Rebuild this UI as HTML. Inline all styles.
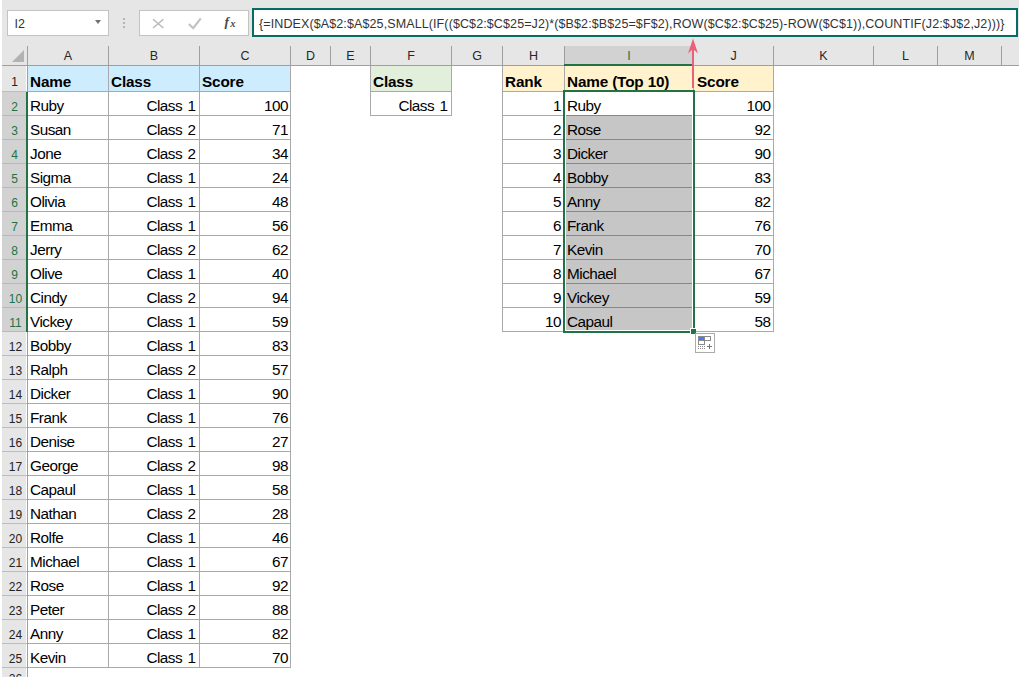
<!DOCTYPE html>
<html lang="en"><head><meta charset="utf-8"><title>Excel – Top 10 names by class</title>
<style>
html,body{margin:0;padding:0}
body{width:1019px;height:677px;overflow:hidden;background:#fff;position:relative;font-family:"Liberation Sans",sans-serif;color:#000}
.a{position:absolute}
.bar{left:0;top:0;width:1019px;height:66px;background:#e6e6e6}
.strip{left:0;top:0;width:2px;height:677px;background:#fff}
.box{background:#fff;border:1px solid #c3c3c3;box-sizing:border-box}
.ui{font-size:12px;color:#262626;white-space:nowrap}
.ch{top:46px;height:19px;line-height:20px;text-align:center;font-size:12.5px;color:#262626}
.rh{left:2px;width:24px;height:23px;line-height:27px;text-align:center;font-size:12px;color:#222;background:#e6e6e6;box-sizing:border-box;padding-left:3px}
.rh.s{background:#d2d2d2;color:#217346}
.c{height:23px;line-height:27px;font-size:15.3px;letter-spacing:-0.5px;word-spacing:1.6px;white-space:nowrap;box-sizing:border-box;padding:0 2px 0 2px;overflow:hidden}
.r{text-align:right}
.b{font-weight:bold;letter-spacing:-0.15px;word-spacing:0}
.v{width:1px;background:#a9a9a9}
.h{height:1px;background:#a9a9a9}
</style></head><body>

<div class="a bar"></div><div class="a strip"></div>
<div class="a box" style="left:7px;top:10px;width:102px;height:26px"></div>
<div class="a ui" style="left:14.6px;top:11px;height:26px;line-height:27px;font-size:12.5px;color:#333">I2</div>
<div class="a" style="left:94.8px;top:20px;width:0;height:0;border-left:3.9px solid transparent;border-right:3.9px solid transparent;border-top:4.2px solid #707070"></div>
<div class="a" style="left:123px;top:18px;width:2px;height:2px;background:#b5b5b5"></div>
<div class="a" style="left:123px;top:22px;width:2px;height:2px;background:#b5b5b5"></div>
<div class="a" style="left:123px;top:26px;width:2px;height:2px;background:#b5b5b5"></div>
<div class="a box" style="left:139px;top:10px;width:110px;height:26px"></div>
<svg class="a" style="left:139px;top:10px" width="110" height="26" viewBox="0 0 110 26"><path d="M14 9.2l10.4 8.8m0-8.8l-10.4 8.8" stroke="#b9b9b9" stroke-width="1.5" fill="none"/><path d="M49.8 14l4.4 4.2l7.6-9.8" stroke="#c2c2c2" stroke-width="2.2" fill="none"/></svg>
<svg class="a" style="left:220px;top:10px" width="24" height="24" viewBox="0 0 24 24" font-family="Liberation Serif, serif" font-style="italic" font-weight="bold" fill="#474747"><text x="4.6" y="15.6" font-size="13.5">f</text><text x="10.2" y="17.3" font-size="10.5">x</text></svg>
<div class="a" style="left:252px;top:8px;width:766px;height:29px;box-sizing:border-box;border:2px solid #056d64;background:#fff"></div>
<div class="a ui" id="fx" style="left:259px;top:11px;height:26px;line-height:27px;font-size:12.5px;letter-spacing:0.11px;color:#333">{=INDEX($A$2:$A$25,SMALL(IF(($C$2:$C$25=J2)*($B$2:$B$25=$F$2),ROW($C$2:$C$25)-ROW($C$1)),COUNTIF(J2:$J$2,J2)))}</div>
<div class="a ch" style="left:28px;width:80px">A</div>
<div class="a" style="left:108px;top:46px;width:1px;height:19px;background:#9f9f9f"></div>
<div class="a ch" style="left:109px;width:90px">B</div>
<div class="a" style="left:199px;top:46px;width:1px;height:19px;background:#9f9f9f"></div>
<div class="a ch" style="left:200px;width:90px">C</div>
<div class="a" style="left:290px;top:46px;width:1px;height:19px;background:#9f9f9f"></div>
<div class="a ch" style="left:291px;width:39px">D</div>
<div class="a" style="left:330px;top:46px;width:1px;height:19px;background:#9f9f9f"></div>
<div class="a ch" style="left:331px;width:39px">E</div>
<div class="a" style="left:370px;top:46px;width:1px;height:19px;background:#9f9f9f"></div>
<div class="a ch" style="left:371px;width:80px">F</div>
<div class="a" style="left:451px;top:46px;width:1px;height:19px;background:#9f9f9f"></div>
<div class="a ch" style="left:452px;width:50px">G</div>
<div class="a" style="left:502px;top:46px;width:1px;height:19px;background:#9f9f9f"></div>
<div class="a ch" style="left:503px;width:61px">H</div>
<div class="a" style="left:564px;top:46px;width:1px;height:19px;background:#9f9f9f"></div>
<div class="a" style="left:565px;top:46px;width:128px;height:20px;background:#d2d2d2;border-bottom:2px solid #217346;box-sizing:border-box"></div>
<div class="a ch" style="left:565px;width:128px;color:#217346">I</div>
<div class="a" style="left:693px;top:46px;width:1px;height:19px;background:#9f9f9f"></div>
<div class="a ch" style="left:694px;width:79px">J</div>
<div class="a" style="left:773px;top:46px;width:1px;height:19px;background:#9f9f9f"></div>
<div class="a ch" style="left:774px;width:99px">K</div>
<div class="a" style="left:873px;top:46px;width:1px;height:19px;background:#9f9f9f"></div>
<div class="a ch" style="left:874px;width:63px">L</div>
<div class="a" style="left:937px;top:46px;width:1px;height:19px;background:#9f9f9f"></div>
<div class="a ch" style="left:938px;width:63px">M</div>
<div class="a" style="left:1001px;top:46px;width:1px;height:19px;background:#9f9f9f"></div>
<div class="a" style="left:27px;top:46px;width:1px;height:19px;background:#9f9f9f"></div>
<div class="a" style="left:2px;top:65px;width:1017px;height:1px;background:#9f9f9f"></div>
<div class="a" style="left:564px;top:64px;width:129px;height:2px;background:#217346"></div>
<svg class="a" style="left:12px;top:50px" width="12" height="12"><path d="M12 0V12H0Z" fill="#b2b2b2"/></svg>
<div class="a rh" style="top:66px;height:25px;line-height:33px;padding-left:1px">1</div>
<div class="a" style="left:2px;top:91px;width:25px;height:1px;background:#bdbdbd"></div>
<div class="a rh s" style="top:92px;height:23px;line-height:30px;padding-left:1px">2</div>
<div class="a" style="left:2px;top:115px;width:25px;height:1px;background:#b8b8b8"></div>
<div class="a rh s" style="top:116px;height:23px;line-height:30px;padding-left:1px">3</div>
<div class="a" style="left:2px;top:139px;width:25px;height:1px;background:#b8b8b8"></div>
<div class="a rh s" style="top:140px;height:23px;line-height:30px;padding-left:1px">4</div>
<div class="a" style="left:2px;top:163px;width:25px;height:1px;background:#b8b8b8"></div>
<div class="a rh s" style="top:164px;height:23px;line-height:30px;padding-left:1px">5</div>
<div class="a" style="left:2px;top:187px;width:25px;height:1px;background:#b8b8b8"></div>
<div class="a rh s" style="top:188px;height:23px;line-height:30px;padding-left:1px">6</div>
<div class="a" style="left:2px;top:211px;width:25px;height:1px;background:#b8b8b8"></div>
<div class="a rh s" style="top:212px;height:23px;line-height:30px;padding-left:1px">7</div>
<div class="a" style="left:2px;top:235px;width:25px;height:1px;background:#b8b8b8"></div>
<div class="a rh s" style="top:236px;height:23px;line-height:30px;padding-left:1px">8</div>
<div class="a" style="left:2px;top:259px;width:25px;height:1px;background:#b8b8b8"></div>
<div class="a rh s" style="top:260px;height:23px;line-height:30px;padding-left:1px">9</div>
<div class="a" style="left:2px;top:283px;width:25px;height:1px;background:#b8b8b8"></div>
<div class="a rh s" style="top:284px;height:23px;line-height:30px">10</div>
<div class="a" style="left:2px;top:307px;width:25px;height:1px;background:#b8b8b8"></div>
<div class="a rh s" style="top:308px;height:23px;line-height:30px">11</div>
<div class="a" style="left:2px;top:331px;width:25px;height:1px;background:#b8b8b8"></div>
<div class="a rh" style="top:332px;height:23px;line-height:30px">12</div>
<div class="a" style="left:2px;top:355px;width:25px;height:1px;background:#bdbdbd"></div>
<div class="a rh" style="top:356px;height:23px;line-height:30px">13</div>
<div class="a" style="left:2px;top:379px;width:25px;height:1px;background:#bdbdbd"></div>
<div class="a rh" style="top:380px;height:23px;line-height:30px">14</div>
<div class="a" style="left:2px;top:403px;width:25px;height:1px;background:#bdbdbd"></div>
<div class="a rh" style="top:404px;height:23px;line-height:30px">15</div>
<div class="a" style="left:2px;top:427px;width:25px;height:1px;background:#bdbdbd"></div>
<div class="a rh" style="top:428px;height:23px;line-height:30px">16</div>
<div class="a" style="left:2px;top:451px;width:25px;height:1px;background:#bdbdbd"></div>
<div class="a rh" style="top:452px;height:23px;line-height:30px">17</div>
<div class="a" style="left:2px;top:475px;width:25px;height:1px;background:#bdbdbd"></div>
<div class="a rh" style="top:476px;height:23px;line-height:30px">18</div>
<div class="a" style="left:2px;top:499px;width:25px;height:1px;background:#bdbdbd"></div>
<div class="a rh" style="top:500px;height:23px;line-height:30px">19</div>
<div class="a" style="left:2px;top:523px;width:25px;height:1px;background:#bdbdbd"></div>
<div class="a rh" style="top:524px;height:23px;line-height:30px">20</div>
<div class="a" style="left:2px;top:547px;width:25px;height:1px;background:#bdbdbd"></div>
<div class="a rh" style="top:548px;height:23px;line-height:30px">21</div>
<div class="a" style="left:2px;top:571px;width:25px;height:1px;background:#bdbdbd"></div>
<div class="a rh" style="top:572px;height:23px;line-height:30px">22</div>
<div class="a" style="left:2px;top:595px;width:25px;height:1px;background:#bdbdbd"></div>
<div class="a rh" style="top:596px;height:23px;line-height:30px">23</div>
<div class="a" style="left:2px;top:619px;width:25px;height:1px;background:#bdbdbd"></div>
<div class="a rh" style="top:620px;height:23px;line-height:30px">24</div>
<div class="a" style="left:2px;top:643px;width:25px;height:1px;background:#bdbdbd"></div>
<div class="a rh" style="top:644px;height:23px;line-height:30px">25</div>
<div class="a" style="left:2px;top:667px;width:25px;height:1px;background:#bdbdbd"></div>
<div class="a rh" style="top:668px;height:23px;line-height:22px">26</div>
<div class="a" style="left:2px;top:691px;width:25px;height:1px;background:#bdbdbd"></div>
<div class="a" style="left:27px;top:66px;width:1px;height:611px;background:#9f9f9f"></div>
<div class="a" style="left:26px;top:92px;width:2px;height:240px;background:#217346"></div>
<div class="a c b" style="left:28px;top:66px;width:80px;height:25px;line-height:31.5px;background:#cdedff">Name</div>
<div class="a c b" style="left:109px;top:66px;width:90px;height:25px;line-height:31.5px;background:#cdedff">Class</div>
<div class="a c b" style="left:200px;top:66px;width:90px;height:25px;line-height:31.5px;background:#cdedff">Score</div>
<div class="a c " style="left:28px;top:92px;width:80px;height:23px;line-height:28px">Ruby</div>
<div class="a c r" style="left:109px;top:92px;width:90px;height:23px;line-height:28px;padding-right:3.5px">Class 1</div>
<div class="a c r" style="left:200px;top:92px;width:90px;height:23px;line-height:28px">100</div>
<div class="a c " style="left:28px;top:116px;width:80px;height:23px;line-height:28px">Susan</div>
<div class="a c r" style="left:109px;top:116px;width:90px;height:23px;line-height:28px;padding-right:3.5px">Class 2</div>
<div class="a c r" style="left:200px;top:116px;width:90px;height:23px;line-height:28px">71</div>
<div class="a c " style="left:28px;top:140px;width:80px;height:23px;line-height:28px">Jone</div>
<div class="a c r" style="left:109px;top:140px;width:90px;height:23px;line-height:28px;padding-right:3.5px">Class 2</div>
<div class="a c r" style="left:200px;top:140px;width:90px;height:23px;line-height:28px">34</div>
<div class="a c " style="left:28px;top:164px;width:80px;height:23px;line-height:28px">Sigma</div>
<div class="a c r" style="left:109px;top:164px;width:90px;height:23px;line-height:28px;padding-right:3.5px">Class 1</div>
<div class="a c r" style="left:200px;top:164px;width:90px;height:23px;line-height:28px">24</div>
<div class="a c " style="left:28px;top:188px;width:80px;height:23px;line-height:28px">Olivia</div>
<div class="a c r" style="left:109px;top:188px;width:90px;height:23px;line-height:28px;padding-right:3.5px">Class 1</div>
<div class="a c r" style="left:200px;top:188px;width:90px;height:23px;line-height:28px">48</div>
<div class="a c " style="left:28px;top:212px;width:80px;height:23px;line-height:28px">Emma</div>
<div class="a c r" style="left:109px;top:212px;width:90px;height:23px;line-height:28px;padding-right:3.5px">Class 1</div>
<div class="a c r" style="left:200px;top:212px;width:90px;height:23px;line-height:28px">56</div>
<div class="a c " style="left:28px;top:236px;width:80px;height:23px;line-height:28px">Jerry</div>
<div class="a c r" style="left:109px;top:236px;width:90px;height:23px;line-height:28px;padding-right:3.5px">Class 2</div>
<div class="a c r" style="left:200px;top:236px;width:90px;height:23px;line-height:28px">62</div>
<div class="a c " style="left:28px;top:260px;width:80px;height:23px;line-height:28px">Olive</div>
<div class="a c r" style="left:109px;top:260px;width:90px;height:23px;line-height:28px;padding-right:3.5px">Class 1</div>
<div class="a c r" style="left:200px;top:260px;width:90px;height:23px;line-height:28px">40</div>
<div class="a c " style="left:28px;top:284px;width:80px;height:23px;line-height:28px">Cindy</div>
<div class="a c r" style="left:109px;top:284px;width:90px;height:23px;line-height:28px;padding-right:3.5px">Class 2</div>
<div class="a c r" style="left:200px;top:284px;width:90px;height:23px;line-height:28px">94</div>
<div class="a c " style="left:28px;top:308px;width:80px;height:23px;line-height:28px">Vickey</div>
<div class="a c r" style="left:109px;top:308px;width:90px;height:23px;line-height:28px;padding-right:3.5px">Class 1</div>
<div class="a c r" style="left:200px;top:308px;width:90px;height:23px;line-height:28px">59</div>
<div class="a c " style="left:28px;top:332px;width:80px;height:23px;line-height:28px">Bobby</div>
<div class="a c r" style="left:109px;top:332px;width:90px;height:23px;line-height:28px;padding-right:3.5px">Class 1</div>
<div class="a c r" style="left:200px;top:332px;width:90px;height:23px;line-height:28px">83</div>
<div class="a c " style="left:28px;top:356px;width:80px;height:23px;line-height:28px">Ralph</div>
<div class="a c r" style="left:109px;top:356px;width:90px;height:23px;line-height:28px;padding-right:3.5px">Class 2</div>
<div class="a c r" style="left:200px;top:356px;width:90px;height:23px;line-height:28px">57</div>
<div class="a c " style="left:28px;top:380px;width:80px;height:23px;line-height:28px">Dicker</div>
<div class="a c r" style="left:109px;top:380px;width:90px;height:23px;line-height:28px;padding-right:3.5px">Class 1</div>
<div class="a c r" style="left:200px;top:380px;width:90px;height:23px;line-height:28px">90</div>
<div class="a c " style="left:28px;top:404px;width:80px;height:23px;line-height:28px">Frank</div>
<div class="a c r" style="left:109px;top:404px;width:90px;height:23px;line-height:28px;padding-right:3.5px">Class 1</div>
<div class="a c r" style="left:200px;top:404px;width:90px;height:23px;line-height:28px">76</div>
<div class="a c " style="left:28px;top:428px;width:80px;height:23px;line-height:28px">Denise</div>
<div class="a c r" style="left:109px;top:428px;width:90px;height:23px;line-height:28px;padding-right:3.5px">Class 1</div>
<div class="a c r" style="left:200px;top:428px;width:90px;height:23px;line-height:28px">27</div>
<div class="a c " style="left:28px;top:452px;width:80px;height:23px;line-height:28px">George</div>
<div class="a c r" style="left:109px;top:452px;width:90px;height:23px;line-height:28px;padding-right:3.5px">Class 2</div>
<div class="a c r" style="left:200px;top:452px;width:90px;height:23px;line-height:28px">98</div>
<div class="a c " style="left:28px;top:476px;width:80px;height:23px;line-height:28px">Capaul</div>
<div class="a c r" style="left:109px;top:476px;width:90px;height:23px;line-height:28px;padding-right:3.5px">Class 1</div>
<div class="a c r" style="left:200px;top:476px;width:90px;height:23px;line-height:28px">58</div>
<div class="a c " style="left:28px;top:500px;width:80px;height:23px;line-height:28px">Nathan</div>
<div class="a c r" style="left:109px;top:500px;width:90px;height:23px;line-height:28px;padding-right:3.5px">Class 2</div>
<div class="a c r" style="left:200px;top:500px;width:90px;height:23px;line-height:28px">28</div>
<div class="a c " style="left:28px;top:524px;width:80px;height:23px;line-height:28px">Rolfe</div>
<div class="a c r" style="left:109px;top:524px;width:90px;height:23px;line-height:28px;padding-right:3.5px">Class 1</div>
<div class="a c r" style="left:200px;top:524px;width:90px;height:23px;line-height:28px">46</div>
<div class="a c " style="left:28px;top:548px;width:80px;height:23px;line-height:28px">Michael</div>
<div class="a c r" style="left:109px;top:548px;width:90px;height:23px;line-height:28px;padding-right:3.5px">Class 1</div>
<div class="a c r" style="left:200px;top:548px;width:90px;height:23px;line-height:28px">67</div>
<div class="a c " style="left:28px;top:572px;width:80px;height:23px;line-height:28px">Rose</div>
<div class="a c r" style="left:109px;top:572px;width:90px;height:23px;line-height:28px;padding-right:3.5px">Class 1</div>
<div class="a c r" style="left:200px;top:572px;width:90px;height:23px;line-height:28px">92</div>
<div class="a c " style="left:28px;top:596px;width:80px;height:23px;line-height:28px">Peter</div>
<div class="a c r" style="left:109px;top:596px;width:90px;height:23px;line-height:28px;padding-right:3.5px">Class 2</div>
<div class="a c r" style="left:200px;top:596px;width:90px;height:23px;line-height:28px">88</div>
<div class="a c " style="left:28px;top:620px;width:80px;height:23px;line-height:28px">Anny</div>
<div class="a c r" style="left:109px;top:620px;width:90px;height:23px;line-height:28px;padding-right:3.5px">Class 1</div>
<div class="a c r" style="left:200px;top:620px;width:90px;height:23px;line-height:28px">82</div>
<div class="a c " style="left:28px;top:644px;width:80px;height:23px;line-height:28px">Kevin</div>
<div class="a c r" style="left:109px;top:644px;width:90px;height:23px;line-height:28px;padding-right:3.5px">Class 1</div>
<div class="a c r" style="left:200px;top:644px;width:90px;height:23px;line-height:28px">70</div>
<div class="a c b" style="left:371px;top:66px;width:80px;height:25px;line-height:31.5px;background:#e2efda">Class</div>
<div class="a c r" style="left:371px;top:92px;width:80px;height:23px;line-height:28px;padding-right:3.5px">Class 1</div>
<div class="a c b" style="left:503px;top:66px;width:61px;height:25px;line-height:31.5px;background:#fff2cc">Rank</div>
<div class="a c b" style="left:565px;top:66px;width:128px;height:25px;line-height:31.5px;background:#fff2cc">Name (Top 10)</div>
<div class="a c b" style="left:694px;top:66px;width:79px;height:25px;line-height:31.5px;background:#fff2cc;padding-left:3px">Score</div>
<div class="a c r" style="left:503px;top:92px;width:61px;height:23px;line-height:28px;padding-right:3px">1</div>
<div class="a c " style="left:565px;top:92px;width:128px;height:23px;line-height:28px">Ruby</div>
<div class="a c r" style="left:694px;top:92px;width:79px;height:23px;line-height:28px;padding-right:2.5px">100</div>
<div class="a c r" style="left:503px;top:116px;width:61px;height:23px;line-height:28px;padding-right:3px">2</div>
<div class="a c " style="left:565px;top:116px;width:128px;height:23px;line-height:28px;background:#c6c6c6">Rose</div>
<div class="a c r" style="left:694px;top:116px;width:79px;height:23px;line-height:28px;padding-right:2.5px">92</div>
<div class="a c r" style="left:503px;top:140px;width:61px;height:23px;line-height:28px;padding-right:3px">3</div>
<div class="a c " style="left:565px;top:140px;width:128px;height:23px;line-height:28px;background:#c6c6c6">Dicker</div>
<div class="a c r" style="left:694px;top:140px;width:79px;height:23px;line-height:28px;padding-right:2.5px">90</div>
<div class="a c r" style="left:503px;top:164px;width:61px;height:23px;line-height:28px;padding-right:3px">4</div>
<div class="a c " style="left:565px;top:164px;width:128px;height:23px;line-height:28px;background:#c6c6c6">Bobby</div>
<div class="a c r" style="left:694px;top:164px;width:79px;height:23px;line-height:28px;padding-right:2.5px">83</div>
<div class="a c r" style="left:503px;top:188px;width:61px;height:23px;line-height:28px;padding-right:3px">5</div>
<div class="a c " style="left:565px;top:188px;width:128px;height:23px;line-height:28px;background:#c6c6c6">Anny</div>
<div class="a c r" style="left:694px;top:188px;width:79px;height:23px;line-height:28px;padding-right:2.5px">82</div>
<div class="a c r" style="left:503px;top:212px;width:61px;height:23px;line-height:28px;padding-right:3px">6</div>
<div class="a c " style="left:565px;top:212px;width:128px;height:23px;line-height:28px;background:#c6c6c6">Frank</div>
<div class="a c r" style="left:694px;top:212px;width:79px;height:23px;line-height:28px;padding-right:2.5px">76</div>
<div class="a c r" style="left:503px;top:236px;width:61px;height:23px;line-height:28px;padding-right:3px">7</div>
<div class="a c " style="left:565px;top:236px;width:128px;height:23px;line-height:28px;background:#c6c6c6">Kevin</div>
<div class="a c r" style="left:694px;top:236px;width:79px;height:23px;line-height:28px;padding-right:2.5px">70</div>
<div class="a c r" style="left:503px;top:260px;width:61px;height:23px;line-height:28px;padding-right:3px">8</div>
<div class="a c " style="left:565px;top:260px;width:128px;height:23px;line-height:28px;background:#c6c6c6">Michael</div>
<div class="a c r" style="left:694px;top:260px;width:79px;height:23px;line-height:28px;padding-right:2.5px">67</div>
<div class="a c r" style="left:503px;top:284px;width:61px;height:23px;line-height:28px;padding-right:3px">9</div>
<div class="a c " style="left:565px;top:284px;width:128px;height:23px;line-height:28px;background:#c6c6c6">Vickey</div>
<div class="a c r" style="left:694px;top:284px;width:79px;height:23px;line-height:28px;padding-right:2.5px">59</div>
<div class="a c r" style="left:503px;top:308px;width:61px;height:23px;line-height:28px;padding-right:3px">10</div>
<div class="a c " style="left:565px;top:308px;width:128px;height:23px;line-height:28px;background:#c6c6c6">Capaul</div>
<div class="a c r" style="left:694px;top:308px;width:79px;height:23px;line-height:28px;padding-right:2.5px">58</div>
<div class="a v" style="left:108px;top:66px;height:602px"></div>
<div class="a v" style="left:199px;top:66px;height:602px"></div>
<div class="a v" style="left:290px;top:66px;height:602px"></div>
<div class="a h" style="left:28px;top:91px;width:263px"></div>
<div class="a h" style="left:28px;top:115px;width:263px"></div>
<div class="a h" style="left:28px;top:139px;width:263px"></div>
<div class="a h" style="left:28px;top:163px;width:263px"></div>
<div class="a h" style="left:28px;top:187px;width:263px"></div>
<div class="a h" style="left:28px;top:211px;width:263px"></div>
<div class="a h" style="left:28px;top:235px;width:263px"></div>
<div class="a h" style="left:28px;top:259px;width:263px"></div>
<div class="a h" style="left:28px;top:283px;width:263px"></div>
<div class="a h" style="left:28px;top:307px;width:263px"></div>
<div class="a h" style="left:28px;top:331px;width:263px"></div>
<div class="a h" style="left:28px;top:355px;width:263px"></div>
<div class="a h" style="left:28px;top:379px;width:263px"></div>
<div class="a h" style="left:28px;top:403px;width:263px"></div>
<div class="a h" style="left:28px;top:427px;width:263px"></div>
<div class="a h" style="left:28px;top:451px;width:263px"></div>
<div class="a h" style="left:28px;top:475px;width:263px"></div>
<div class="a h" style="left:28px;top:499px;width:263px"></div>
<div class="a h" style="left:28px;top:523px;width:263px"></div>
<div class="a h" style="left:28px;top:547px;width:263px"></div>
<div class="a h" style="left:28px;top:571px;width:263px"></div>
<div class="a h" style="left:28px;top:595px;width:263px"></div>
<div class="a h" style="left:28px;top:619px;width:263px"></div>
<div class="a h" style="left:28px;top:643px;width:263px"></div>
<div class="a h" style="left:28px;top:667px;width:263px"></div>
<div class="a v" style="left:370px;top:66px;height:50px"></div>
<div class="a v" style="left:451px;top:66px;height:50px"></div>
<div class="a h" style="left:370px;top:91px;width:82px"></div>
<div class="a h" style="left:370px;top:115px;width:82px"></div>
<div class="a v" style="left:502px;top:66px;height:266px"></div>
<div class="a v" style="left:564px;top:66px;height:266px"></div>
<div class="a v" style="left:693px;top:66px;height:266px"></div>
<div class="a v" style="left:773px;top:66px;height:266px"></div>
<div class="a h" style="left:502px;top:91px;width:272px"></div>
<div class="a h" style="left:502px;top:115px;width:272px"></div>
<div class="a h" style="left:502px;top:139px;width:272px"></div>
<div class="a h" style="left:502px;top:163px;width:272px"></div>
<div class="a h" style="left:502px;top:187px;width:272px"></div>
<div class="a h" style="left:502px;top:211px;width:272px"></div>
<div class="a h" style="left:502px;top:235px;width:272px"></div>
<div class="a h" style="left:502px;top:259px;width:272px"></div>
<div class="a h" style="left:502px;top:283px;width:272px"></div>
<div class="a h" style="left:502px;top:307px;width:272px"></div>
<div class="a h" style="left:502px;top:331px;width:272px"></div>
<div class="a" style="left:566px;top:115px;width:126px;height:1px;background:#878787"></div>
<div class="a" style="left:566px;top:139px;width:126px;height:1px;background:#878787"></div>
<div class="a" style="left:566px;top:163px;width:126px;height:1px;background:#878787"></div>
<div class="a" style="left:566px;top:187px;width:126px;height:1px;background:#878787"></div>
<div class="a" style="left:566px;top:211px;width:126px;height:1px;background:#878787"></div>
<div class="a" style="left:566px;top:235px;width:126px;height:1px;background:#878787"></div>
<div class="a" style="left:566px;top:259px;width:126px;height:1px;background:#878787"></div>
<div class="a" style="left:566px;top:283px;width:126px;height:1px;background:#878787"></div>
<div class="a" style="left:566px;top:307px;width:126px;height:1px;background:#878787"></div>
<div class="a" style="left:563px;top:90px;width:132px;height:243px;box-sizing:border-box;border:2px solid #217346;"></div>
<div class="a" style="left:565px;top:92px;width:128px;height:239px;box-sizing:border-box;border:1px solid #fff;"></div>
<div class="a" style="left:690px;top:328px;width:6px;height:6px;background:#fff"></div>
<div class="a" style="left:691px;top:329px;width:5px;height:5px;background:#217346"></div>
<svg class="a" style="left:695px;top:333px" width="20" height="20" viewBox="0 0 20 20">
<rect x="0.5" y="0.5" width="19" height="19" fill="#fff" stroke="#ababab"/>
<rect x="3.5" y="3.5" width="6" height="4" fill="#3f7fff" stroke="#8a8a8a"/>
<rect x="9.5" y="3.5" width="6" height="4" fill="#fff" stroke="#8a8a8a"/>
<rect x="3.5" y="7.5" width="6" height="4" fill="#fff" stroke="#8a8a8a"/>
<path d="M3 13.5h1m1 0h1m1 0h1m1 0h1M3 15.5h1m1 0h1m1 0h1m1 0h1" stroke="#8a8a8a" stroke-width="1" fill="none"/>
<path d="M12 13.5h5M14.5 11v5" stroke="#777" stroke-width="1" fill="none"/>
</svg>
<svg class="a" style="left:685px;top:38px" width="16" height="52" viewBox="0 0 16 52">
<path d="M8 50V8" stroke="#e9627a" stroke-width="2" fill="none"/>
<path d="M8 0.5L13 15.5L8 11L3 15.5Z" fill="#e9627a"/>
</svg>
</body></html>
